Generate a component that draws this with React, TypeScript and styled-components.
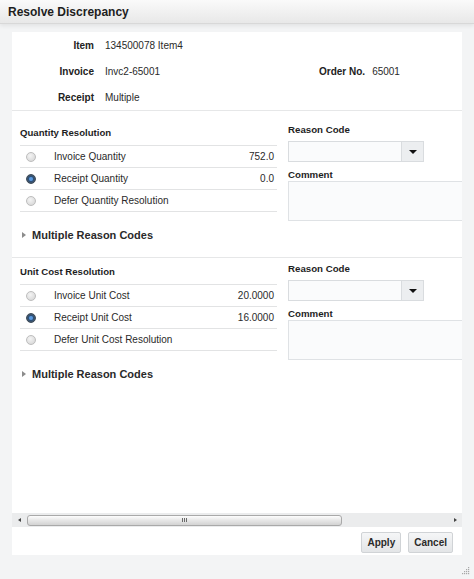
import React from 'react'
import styled, { createGlobalStyle } from 'styled-components'

interface ResolutionOption {
  label: string
  value?: string
  checked?: boolean
}

interface ResolutionSectionProps {
  title: string
  options: ResolutionOption[]
  padTop: number
  divided?: boolean
}

const quantityOptions: ResolutionOption[] = [
  { label: 'Invoice Quantity', value: '752.0' },
  { label: 'Receipt Quantity', value: '0.0', checked: true },
  { label: 'Defer Quantity Resolution' },
]

const unitCostOptions: ResolutionOption[] = [
  { label: 'Invoice Unit Cost', value: '20.0000' },
  { label: 'Receipt Unit Cost', value: '16.0000', checked: true },
  { label: 'Defer Unit Cost Resolution' },
]

const ResolutionSection: React.FC<ResolutionSectionProps> = ({ title, options, padTop, divided }) => (
  <Section $padTop={padTop} $divided={divided}>
    <LeftColumn>
      <SectionTitle>{title}</SectionTitle>
      <OptionList>
        {options.map((option) => (
          <OptionRow key={option.label}>
            <Radio $checked={option.checked} />
            <OptionLabel>{option.label}</OptionLabel>
            <OptionValue>{option.value}</OptionValue>
          </OptionRow>
        ))}
      </OptionList>
      <Disclosure>
        <DisclosureArrow />
        Multiple Reason Codes
      </Disclosure>
    </LeftColumn>
    <RightColumn>
      <FieldLabel>Reason Code</FieldLabel>
      <Select>
        <SelectValue />
        <SelectButton>
          <DownArrow />
        </SelectButton>
      </Select>
      <FieldLabel $gap={6}>Comment</FieldLabel>
      <Comment />
    </RightColumn>
  </Section>
)

const App: React.FC = () => (
  <>
    <GlobalStyle />
    <Dialog>
      <Header>
        <Title>Resolve Discrepancy</Title>
      </Header>
      <Body>
        <Panel>
          <ScrollArea>
            <Content>
              <InfoGrid>
                <InfoLabel>Item</InfoLabel>
                <InfoValue>134500078 Item4</InfoValue>
                <span />
                <InfoLabel>Invoice</InfoLabel>
                <InfoValue>Invc2-65001</InfoValue>
                <OrderField>
                  <InfoLabel>Order No.</InfoLabel>
                  <InfoValue>65001</InfoValue>
                </OrderField>
                <InfoLabel>Receipt</InfoLabel>
                <InfoValue>Multiple</InfoValue>
                <span />
              </InfoGrid>
              <ResolutionSection title="Quantity Resolution" options={quantityOptions} padTop={12} divided />
              <ResolutionSection title="Unit Cost Resolution" options={unitCostOptions} padTop={4} />
            </Content>
          </ScrollArea>
          <HScrollbar>
            <ScrollArrow $dir="left" />
            <ScrollTrack>
              <ScrollThumb>
                <Grip />
              </ScrollThumb>
            </ScrollTrack>
            <ScrollArrow $dir="right" />
          </HScrollbar>
          <ButtonBar>
            <Button>Apply</Button>
            <Button>Cancel</Button>
          </ButtonBar>
        </Panel>
      </Body>
      <Footer>
        <svg width="8" height="8" viewBox="0 0 8 8">
          <g fill="#a8a8a8">
            <rect x="6" y="0" width="1.2" height="1.2" />
            <rect x="4" y="2" width="1.2" height="1.2" />
            <rect x="6" y="2" width="1.2" height="1.2" />
            <rect x="2" y="4" width="1.2" height="1.2" />
            <rect x="4" y="4" width="1.2" height="1.2" />
            <rect x="6" y="4" width="1.2" height="1.2" />
            <rect x="0" y="6" width="1.2" height="1.2" />
            <rect x="2" y="6" width="1.2" height="1.2" />
            <rect x="4" y="6" width="1.2" height="1.2" />
            <rect x="6" y="6" width="1.2" height="1.2" />
          </g>
        </svg>
      </Footer>
    </Dialog>
  </>
)

const GlobalStyle = createGlobalStyle`
  html, body {
    margin: 0;
    padding: 0;
  }
  body {
    font-family: "Liberation Sans", Arial, sans-serif;
    color: #2a2a2a;
  }
`

const Dialog = styled.div`
  width: 474px;
  height: 579px;
  display: flex;
  flex-direction: column;
  background: #f3f4f5;
  overflow: hidden;
`

const Header = styled.div`
  height: 23px;
  flex-shrink: 0;
  display: flex;
  align-items: center;
  padding-left: 8px;
  background: linear-gradient(#fafafa, #e8e8e8);
  border-bottom: 1px solid #d8d8d8;
  box-shadow: 0 2px 4px rgba(0, 0, 0, 0.07);
  position: relative;
  z-index: 1;
`

const Title = styled.h1`
  margin: 0;
  font-size: 12px;
  font-weight: bold;
  color: #1e1e1e;
`

const Body = styled.div`
  flex: 1;
  padding: 8px 12px 0;
  display: flex;
  min-height: 0;
`

const Panel = styled.div`
  flex: 1;
  display: flex;
  flex-direction: column;
  background: #fff;
  min-width: 0;
`

const ScrollArea = styled.div`
  flex: 1;
  overflow: hidden;
`

const Content = styled.div`
  width: 603px;
`

const InfoGrid = styled.div`
  display: grid;
  grid-template-columns: 82px 203px auto;
  grid-auto-rows: 26px;
  column-gap: 11px;
  align-items: center;
  border-bottom: 1px solid #e6e7e8;
`

const InfoLabel = styled.span`
  font-size: 10px;
  font-weight: bold;
  color: #222;
  text-align: right;
`

const InfoValue = styled.span`
  font-size: 10px;
  color: #2a2a2a;
`

const OrderField = styled.div`
  display: flex;
  gap: 7px;
`

const Section = styled.div<{ $padTop: number; $divided?: boolean }>`
  display: grid;
  grid-template-columns: 257px 200px;
  column-gap: 11px;
  align-items: start;
  padding: ${(p) => p.$padTop}px 8px ${(p) => (p.$divided ? 15 : 0)}px;
  border-bottom: ${(p) => (p.$divided ? '1px solid #e6e7e8' : 'none')};
`

const LeftColumn = styled.div`
  display: flex;
  flex-direction: column;
`

const SectionTitle = styled.div`
  margin-top: 3px;
  padding-bottom: 6px;
  font-size: 9.6px;
  line-height: 13px;
  font-weight: bold;
  color: #1e1e1e;
`

const OptionList = styled.div`
  border-top: 1px solid #e2e3e4;
`

const OptionRow = styled.div`
  height: 21px;
  display: flex;
  align-items: center;
  padding: 0 3px 0 6px;
  border-bottom: 1px solid #e2e3e4;
`

const Radio = styled.span<{ $checked?: boolean }>`
  width: 8px;
  height: 8px;
  border-radius: 50%;
  flex-shrink: 0;
  border: 1px solid ${(p) => (p.$checked ? '#3c4a58' : '#bdbdbd')};
  background: ${(p) =>
    p.$checked
      ? 'radial-gradient(circle, #5b9ae0 0 25%, #2c4f78 45%, #4a5866 75%)'
      : 'radial-gradient(circle at 40% 35%, #f4f4f4, #d2d2d2)'};
`

const OptionLabel = styled.span`
  flex: 1;
  margin-left: 18px;
  font-size: 10px;
  color: #2a2a2a;
`

const OptionValue = styled.span`
  font-size: 10px;
  color: #2a2a2a;
`

const Disclosure = styled.div`
  display: flex;
  align-items: center;
  gap: 6px;
  margin-top: 16px;
  padding-left: 2px;
  font-size: 11px;
  line-height: 14px;
  font-weight: bold;
  color: #2a2a2a;
`

const DisclosureArrow = styled.span`
  width: 0;
  height: 0;
  border-left: 4px solid #8c8c8c;
  border-top: 3.5px solid transparent;
  border-bottom: 3.5px solid transparent;
`

const RightColumn = styled.div`
  display: flex;
  flex-direction: column;
`

const FieldLabel = styled.div<{ $gap?: number }>`
  margin-top: ${(p) => p.$gap ?? 0}px;
  font-size: 9.7px;
  line-height: 13px;
  font-weight: bold;
  color: #1e1e1e;
`

const Select = styled.div`
  margin-top: 5px;
  width: 136px;
  height: 21px;
  box-sizing: border-box;
  display: flex;
  border: 1px solid #d9dcdf;
  background: #fafbfc;
`

const SelectValue = styled.div`
  flex: 1;
`

const SelectButton = styled.div`
  width: 21px;
  display: flex;
  align-items: center;
  justify-content: center;
  background: #eceef0;
  border-left: 1px solid #d9dcdf;
`

const DownArrow = styled.span`
  width: 0;
  height: 0;
  border-top: 4px solid #111;
  border-left: 4px solid transparent;
  border-right: 4px solid transparent;
`

const Comment = styled.div`
  height: 40px;
  box-sizing: border-box;
  border: 1px solid #dfe2e5;
  background: #fafbfc;
`

const HScrollbar = styled.div`
  height: 14px;
  flex-shrink: 0;
  display: flex;
  align-items: center;
  background: #ebeced;
`

const ScrollArrow = styled.div<{ $dir: 'left' | 'right' }>`
  width: 14px;
  height: 14px;
  display: flex;
  align-items: center;
  justify-content: center;

  &::before {
    content: '';
    border-top: 2.5px solid transparent;
    border-bottom: 2.5px solid transparent;
    ${(p) => (p.$dir === 'left' ? 'border-right: 3px solid #444;' : 'border-left: 3px solid #444;')}
  }
`

const ScrollTrack = styled.div`
  flex: 1;
  display: flex;
  align-items: center;
  padding-left: 1px;
`

const ScrollThumb = styled.div`
  width: 313px;
  height: 9px;
  display: flex;
  align-items: center;
  justify-content: center;
  border: 1px solid #a9a9a9;
  border-radius: 3px;
  background: linear-gradient(#fdfdfd, #e6e6e6 50%, #d3d3d3);
`

const Grip = styled.span`
  width: 5px;
  height: 4px;
  background: repeating-linear-gradient(90deg, #6a6a6a 0 1px, transparent 1px 2px);
`

const ButtonBar = styled.div`
  display: flex;
  justify-content: flex-end;
  gap: 7px;
  padding: 5px 9px 2px 0;
`

const Button = styled.button`
  height: 21px;
  padding: 0 5px;
  font-family: "Liberation Sans", Arial, sans-serif;
  font-size: 10px;
  font-weight: bold;
  color: #2a2a2a;
  background: linear-gradient(#f5f6f7, #e3e5e7);
  border: 1px solid #d0d3d6;
  border-radius: 2px;
`

const Footer = styled.div`
  height: 24px;
  flex-shrink: 0;
  display: flex;
  justify-content: flex-end;
  align-items: flex-end;
  padding: 0 4px 4px 0;
  box-sizing: border-box;
`

export default App
